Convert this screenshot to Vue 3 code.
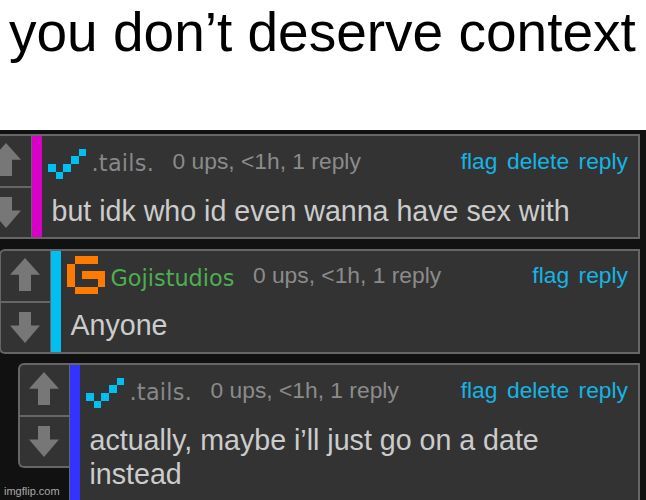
<template>
    <div class="meme">
        <h1 class="caption">you don’t deserve context</h1>
        <div class="thread">
            <div v-for="(comment, i) in comments" :key="i" class="comment" :class="comment.level">
                <div class="votes">
                    <button class="vote" aria-label="Upvote">
                        <svg width="30" height="33" viewBox="0 0 30 33"><path d="M15 0L30 16.7H21V33H9V16.7H0Z" /></svg>
                    </button>
                    <button class="vote down" aria-label="Downvote">
                        <svg width="30" height="31" viewBox="0 0 30 31"><path d="M9 0H21V13.5H30L15 31L0 13.5H9Z" /></svg>
                    </button>
                </div>
                <div class="stripe"></div>
                <div class="body">
                    <div class="head">
                        <svg class="icon" viewBox="0 0 5 5" :class="comment.icon">
                            <path :d="icons[comment.icon]" />
                        </svg>
                        <span class="name" :class="comment.icon">{{ comment.name }}</span>
                        <span class="meta">0 ups, &lt;1h, 1 reply</span>
                        <div class="links">
                            <a v-for="link in comment.links" :key="link">{{ link }}</a>
                        </div>
                    </div>
                    <p class="text">{{ comment.text }}</p>
                </div>
            </div>
            <span class="watermark">imgflip.com</span>
        </div>
    </div>
</template>

<script setup>
const icons = {
    check: 'M0 3H1V4H0ZM1 4H2V5H1ZM2 3H3V4H2ZM3 2H4V3H3ZM4 1H5V2H4Z',
    goji: 'M1 0H4V1H1ZM0 1H1V4H0ZM1 4H4V5H1ZM2 2H5V4H4V3H2Z'
};

const comments = [
    {
        level: 'first',
        icon: 'check',
        name: '.tails.',
        links: ['flag', 'delete', 'reply'],
        text: 'but idk who id even wanna have sex with'
    },
    {
        level: 'second',
        icon: 'goji',
        name: 'Gojistudios',
        links: ['flag', 'reply'],
        text: 'Anyone'
    },
    {
        level: 'third',
        icon: 'check',
        name: '.tails.',
        links: ['flag', 'delete', 'reply'],
        text: 'actually, maybe i’ll just go on a date instead'
    }
];
</script>

<style>
body {
    margin: 0;
}
</style>

<style scoped>
.meme {
    width: 646px;
    height: 500px;
    overflow: hidden;
    background: #fff;
    font-family: "Liberation Sans", Arial, sans-serif;
}

.caption {
    box-sizing: border-box;
    height: 130px;
    margin: 0;
    padding: 1px 0 0 9px;
    font-size: 55px;
    line-height: 62px;
    font-weight: 400;
    color: #000;
    white-space: nowrap;
}

.thread {
    position: relative;
    box-sizing: border-box;
    height: 370px;
    padding: 4px 6px 0 0;
    overflow: hidden;
    background: #111;
}

.comment {
    display: flex;
    align-items: flex-start;
    height: 105px;
    margin-bottom: 10px;
}

.comment.first {
    margin-left: -20px;
}

.comment.second {
    margin-left: -1px;
    margin-bottom: 9px;
}

.comment.third {
    margin-left: 18px;
    height: 150px;
}

.votes {
    box-sizing: border-box;
    width: 51px;
    height: 105px;
    border: 2px solid #666;
    border-right: 0;
    border-radius: 6px 0 0 6px;
    background: #333;
}

.vote {
    display: flex;
    align-items: flex-start;
    box-sizing: border-box;
    width: 49px;
    height: 50px;
    padding: 7px 0 0 9px;
    border: 0;
    background: none;
}

.vote.down {
    height: 51px;
    padding-top: 9px;
    border-top: 2px solid #666;
}

.vote svg {
    display: block;
    fill: #777;
}

.stripe {
    box-sizing: border-box;
    width: 11px;
    height: 100%;
    border: solid #666;
    border-width: 2px 0 2px 1px;
}

.first .stripe {
    background: #d900c8;
}

.second .stripe {
    background: #00bff3;
}

.third .stripe {
    background: #3333ff;
}

.body {
    box-sizing: border-box;
    flex: 1;
    height: 100%;
    padding: 5px 10px 0 5.5px;
    border: 2px solid #666;
    border-left: 0;
    background: #333;
}

.head {
    display: flex;
    align-items: flex-start;
    height: 52.5px;
    white-space: nowrap;
}

.icon {
    width: 38.4px;
    height: 38.4px;
    flex: none;
    shape-rendering: crispEdges;
}

.icon.check {
    fill: #00bff3;
}

.icon.goji {
    fill: #ff7b00;
}

.name {
    margin: 8px 0 0 5.6px;
    font-family: "DejaVu Sans", Verdana, sans-serif;
    font-size: 22.4px;
    line-height: 28px;
}

.name.check {
    color: #888;
    letter-spacing: 0.25px;
}

.name.goji {
    color: #4caf50;
}

.meta {
    margin: 7px 0 0 18.5px;
    font-size: 22.8px;
    line-height: 26px;
    color: #8b8b8b;
}

.links {
    display: flex;
    gap: 9.5px;
    margin: 7px 0 0 auto;
    font-size: 22.8px;
    line-height: 26px;
    color: #16b4e3;
}

.second .meta,
.second .links {
    margin-top: 6px;
}

.text {
    width: 530px;
    margin: 0 0 0 4px;
    font-size: 28.6px;
    line-height: 34px;
    color: #ccc;
}

.second .text {
    margin-top: -1px;
}

.third .text {
    width: 480px;
}

.watermark {
    position: absolute;
    left: 4px;
    bottom: 2px;
    font-size: 11px;
    line-height: 13px;
    color: #aaa;
}
</style>
